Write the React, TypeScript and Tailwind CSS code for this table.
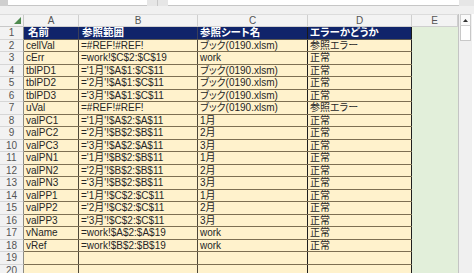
import React from 'react';

type Line = { name: string; range: string; sheet: string; status: string };

const rows: Line[] = [
  { name: 'cellVal', range: '=#REF!#REF!', sheet: 'ブック(0190.xlsm)', status: '参照エラー' },
  { name: 'cErr', range: '=work!$C$2:$C$19', sheet: 'work', status: '正常' },
  { name: 'tblPD1', range: "='1月'!$A$1:$C$11", sheet: 'ブック(0190.xlsm)', status: '正常' },
  { name: 'tblPD2', range: "='2月'!$A$1:$C$11", sheet: 'ブック(0190.xlsm)', status: '正常' },
  { name: 'tblPD3', range: "='3月'!$A$1:$C$11", sheet: 'ブック(0190.xlsm)', status: '正常' },
  { name: 'uVal', range: '=#REF!#REF!', sheet: 'ブック(0190.xlsm)', status: '参照エラー' },
  { name: 'valPC1', range: "='1月'!$A$2:$A$11", sheet: '1月', status: '正常' },
  { name: 'valPC2', range: "='2月'!$B$2:$B$11", sheet: '2月', status: '正常' },
  { name: 'valPC3', range: "='3月'!$A$2:$A$11", sheet: '3月', status: '正常' },
  { name: 'valPN1', range: "='1月'!$B$2:$B$11", sheet: '1月', status: '正常' },
  { name: 'valPN2', range: "='2月'!$B$2:$B$11", sheet: '2月', status: '正常' },
  { name: 'valPN3', range: "='3月'!$B$2:$B$11", sheet: '3月', status: '正常' },
  { name: 'valPP1', range: "='1月'!$C$2:$C$11", sheet: '1月', status: '正常' },
  { name: 'valPP2', range: "='2月'!$C$2:$C$11", sheet: '2月', status: '正常' },
  { name: 'valPP3', range: "='3月'!$C$2:$C$11", sheet: '3月', status: '正常' },
  { name: 'vName', range: '=work!$A$2:$A$19', sheet: 'work', status: '正常' },
  { name: 'vRef', range: '=work!$B$2:$B$19', sheet: 'work', status: '正常' },
  { name: '', range: '', sheet: '', status: '' },
  { name: '', range: '', sheet: '', status: '' },
];

const font = "font-['Liberation_Sans','Noto_Sans_CJK_JP',sans-serif] [font-feature-settings:'palt']";

const RowNum = ({ n }: { n: number }) => (
  <div className="w-[24px] shrink-0 border-r border-b border-r-[#8c8c84] border-b-[#d6d6d6] bg-[#f2f2f2] text-center text-[10px] text-[#555]">
    {n}
  </div>
);

const cell = 'shrink-0 overflow-hidden whitespace-nowrap px-[2px] text-[10px] text-[#262626]';

export default function App() {
  return (
    <div className={`flex h-[273px] w-[474px] flex-col overflow-hidden bg-[#efefef] ${font}`}>
      {/* formula bar, cut off at the top */}
      <div className="flex h-[6px] shrink-0 bg-[#e6e6e6]">
        <div className="w-[8px] bg-[#cfcfcf]" />
        <div className="w-[139px] border-b border-[#c6c6c6] bg-white" />
        <div className="flex w-[21px] justify-center">
          <div className="w-px bg-[#c8c8c8]" />
        </div>
        <div className="w-[291px] border-b border-[#c6c6c6] bg-white" />
      </div>
      <div className="h-[8px] shrink-0 bg-[#f0f0f0]" />

      <div className="flex min-h-0 flex-1">
        <div className="w-[458px] shrink-0">
          {/* column letters */}
          <div className="flex h-[13px] border-t border-[#dcdcdc] bg-[#f3f3f3] text-[10px] leading-[12px] text-[#555]">
            <div className="relative w-[24px] shrink-0 border-r border-b border-[#c8c8c8]">
              <svg className="absolute right-[2px] bottom-[2px]" width="7" height="7" viewBox="0 0 7 7">
                <polygon points="7,0 7,7 0,7" fill="#4e8a4e" />
              </svg>
            </div>
            {[
              ['A', 'w-[55px]'],
              ['B', 'w-[119px]'],
              ['C', 'w-[110px]'],
              ['D', 'w-[104px]'],
              ['E', 'w-[46px]'],
            ].map(([l, w]) => (
              <div key={l} className={`${w} shrink-0 border-r border-b border-[#cfcfcf] text-center`}>
                {l}
              </div>
            ))}
          </div>

          {/* row 1 header */}
          <div className="flex h-[12.5px] leading-[11.5px]">
            <RowNum n={1} />
            <div className="flex shrink-0 border-b border-[#5e5a50] bg-[#10246a] text-[10.5px] font-bold text-white">
              <div className="w-[55px] border-r border-[#3a3f5a] pl-[4px]">名前</div>
              <div className="w-[119px] border-r border-[#3a3f5a] pl-[3px]">参照範囲</div>
              <div className="w-[110px] border-r border-[#1a1a1a] pl-[2px]">参照シート名</div>
              <div className="w-[104px] border-r border-[#1a1a1a] pl-[2px]">エラーかどうか</div>
            </div>
            <div className="w-[46px] shrink-0 bg-[#e2efda]" />
          </div>

          {rows.map((r, i) => (
            <div key={i} className="flex h-[12.5px] leading-[11.5px]">
              <RowNum n={i + 2} />
              <div className="flex shrink-0 border-b border-[#7d6f52] bg-[#fff2cc]">
                <div className={`${cell} w-[55px] border-r border-[#4e4738]`}>{r.name}</div>
                <div className={`${cell} w-[119px] border-r border-[#4e4738]`}>{r.range}</div>
                <div className={`${cell} w-[110px] border-r border-[#1f1f1f]`}>{r.sheet}</div>
                <div className={`${cell} w-[104px] border-r-[1.5px] border-[#1f1f1f]`}>{r.status}</div>
              </div>
              <div className="w-[46px] shrink-0 bg-[#e2efda]" />
            </div>
          ))}
        </div>

        {/* vertical scrollbar */}
        <div className="flex w-[16px] shrink-0 border-l border-[#c4c4c4] bg-[#f4f4f6]">
          <div className="flex w-[13px] flex-col bg-[#f0f0f0] px-[1px]">
            <div className="flex h-[12px] items-center justify-center border border-[#cfcfcf] bg-[#fafafa]">
              <svg width="5" height="3" viewBox="0 0 5 3">
                <polygon points="2.5,0 5,3 0,3" fill="#333" />
              </svg>
            </div>
            <div className="h-[15px] border border-t-0 border-[#c8c8c8] bg-white" />
          </div>
          <div className="w-[2px] bg-white" />
        </div>
      </div>
    </div>
  );
}
